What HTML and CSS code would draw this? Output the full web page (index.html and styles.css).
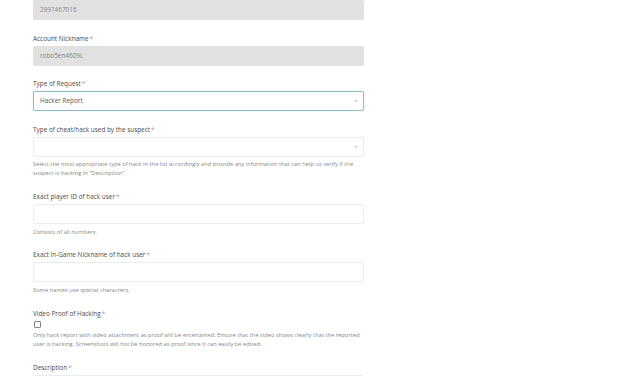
FILE: index.html
```html
<!DOCTYPE html>
<html lang="en">
<head>
    <meta charset="UTF-8">
    <meta name="viewport" content="width=device-width, initial-scale=1.0">
    <title>Submit a request</title>
    <link rel="stylesheet" href="styles.css">
</head>
<body>

    <form class="request-form">
        <div class="group">
            <div class="field disabled">2897467016</div>
        </div>

        <div class="group">
            <label>Account Nickname<span class="req">*</span></label>
            <div class="field disabled">robo5en4609L</div>
        </div>

        <div class="group">
            <label>Type of Request<span class="req">*</span></label>
            <div class="field select focused">
                <span>Hacker Report</span>
                <span class="arrow">&#9662;</span>
            </div>
        </div>

        <div class="group">
            <label>Type of cheat/hack used by the suspect<span class="req">*</span></label>
            <div class="field select">
                <span></span>
                <span class="arrow">&#9662;</span>
            </div>
            <p class="hint">Select the most appropriate type of hack in the list accordingly and provide any information that can help us verify if the suspect is hacking in "Description"</p>
        </div>

        <div class="group">
            <label>Exact player ID of hack user<span class="req">*</span></label>
            <div class="field"></div>
            <p class="hint">Consists of all numbers.</p>
        </div>

        <div class="group">
            <label>Exact In-Game Nickname of hack user<span class="req">*</span></label>
            <div class="field"></div>
            <p class="hint">Some names use special characters.</p>
        </div>

        <div class="group">
            <label>Video Proof of Hacking<span class="req">*</span></label>
            <span class="checkbox"></span>
            <p class="hint">Only hack report with video attachment as proof will be entertained. Ensure that the video shows clearly that the reported user is hacking. Screenshots will not be honored as proof since it can easily be edited.</p>
        </div>

        <div class="group">
            <label>Description<span class="req">*</span></label>
            <div class="field"></div>
        </div>
    </form>

</body>
</html>
```

FILE: styles.css
```css
body { margin: 0; background: white; font-family: "Open Sans", "Noto Sans", Arial, sans-serif; color: #555; overflow: hidden; }
.request-form { width: 331px; margin-left: 33px; }
.group { margin-bottom: 13.5px; }
label { display: block; font-size: 6.4px; line-height: 9px; margin-bottom: 3px; color: #4a4a4a; }
.req { color: #d98a88; margin-left: 1px; }
.field { height: 20px; box-sizing: border-box; border: 1px solid #ececec; border-radius: 2px; background: white; padding: 0 6px; font-size: 6.4px; line-height: 18px; color: #555; display: flex; justify-content: space-between; align-items: center; }
.field.disabled { background: #e1e1e1; border-color: #e1e1e1; color: #888; }
.field.focused { border-color: #8fbcc4; box-shadow: 0 0 1px rgba(100, 160, 170, 0.4); }
.arrow { font-size: 4px; color: #aaa; }
.hint { margin: 3.5px 0 0 0; font-size: 5.75px; line-height: 9.3px; color: #888; }
.checkbox { display: block; width: 5px; height: 5px; border: 1px solid #888; border-radius: 1px; margin: 0 0 0 1px; }
```
